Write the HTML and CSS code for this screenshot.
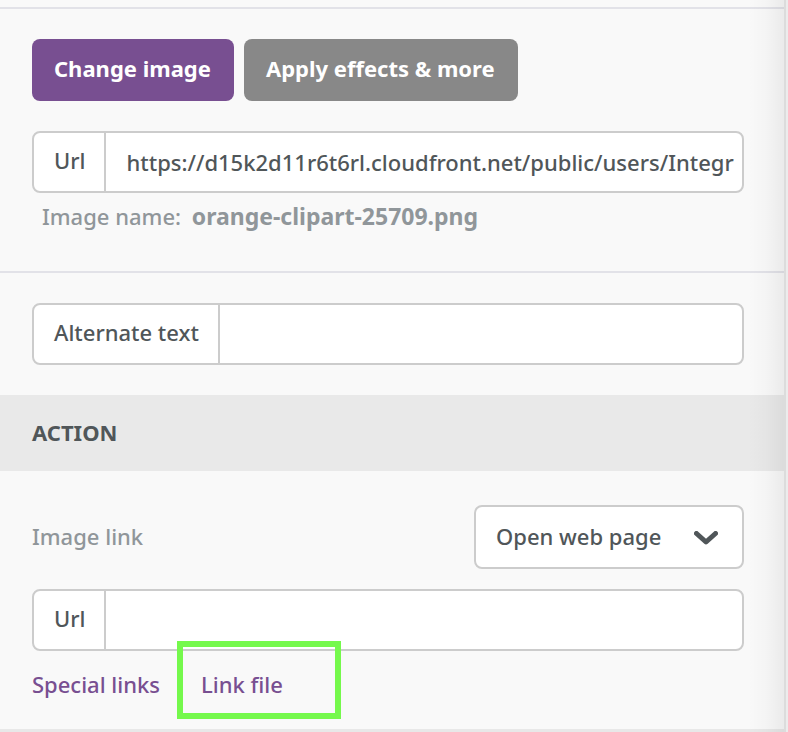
FILE: index.html
```html
<!DOCTYPE html>
<html lang="en">
<head>
<meta charset="utf-8">
<meta name="viewport" content="width=device-width, initial-scale=1">
<title>Image settings</title>
<link rel="stylesheet" href="styles.css">
</head>
<body>
<main class="panel">
  <section class="section section-image">
    <div class="buttons">
      <button type="button" class="btn btn-primary">Change image</button>
      <button type="button" class="btn btn-secondary">Apply effects &amp; more</button>
    </div>
    <div class="field">
      <label class="field-label" for="image-url">Url</label>
      <input class="field-input" id="image-url" type="text" value="https://d15k2d11r6t6rl.cloudfront.net/public/users/Integr">
    </div>
    <p class="image-name">Image name: <strong class="file-name">orange-clipart-25709.png</strong></p>
  </section>
  <section class="section section-alt">
    <div class="field">
      <label class="field-label" for="alt-text">Alternate text</label>
      <input class="field-input" id="alt-text" type="text">
    </div>
  </section>
  <h2 class="heading">ACTION</h2>
  <section class="section section-action">
    <div class="link-row">
      <label class="link-label" for="link-type">Image link</label>
      <div class="select-wrap">
        <select class="select" id="link-type">
          <option>Open web page</option>
        </select>
        <svg class="chevron" viewBox="0 0 24 14" aria-hidden="true"><path d="M2.500 2.500 12 11 21.500 2.500"/></svg>
      </div>
    </div>
    <div class="field">
      <label class="field-label" for="link-url">Url</label>
      <input class="field-input" id="link-url" type="text">
    </div>
    <nav class="links">
      <a class="link" href="#special">Special links</a>
      <a class="link link-marked" href="#file">Link file</a>
    </nav>
  </section>
</main>
</body>
</html>
```
FILE: styles.css
```css
*,
*::before,
*::after {
  box-sizing: border-box;
}

body {
  margin: 0;
  background: #ececec;
  color: #505659;
  font: 500 22px/30px "Noto Sans", "Open Sans", sans-serif;
}

.panel {
  position: relative;
  margin-right: 2px;
  padding-top: 7px;
  border-right: 2px solid #dcdcdc;
  background: #f9f9f9;
}

/* Soft shade along the right edge */
.panel::after {
  content: "";
  position: absolute;
  top: 0;
  right: 0;
  bottom: 0;
  width: 36px;
  background: linear-gradient(to right, rgba(0, 0, 0, 0), rgba(0, 0, 0, 0.02) 50%, rgba(0, 0, 0, 0.06));
  pointer-events: none;
}

.section {
  padding: 30px 40px 30px 32px;
}

.section-image {
  border-top: 2px solid #e2e2e8;
  border-bottom: 2px solid #e2e2e8;
  padding-bottom: 40px;
}

.section-action {
  padding-top: 34px;
  border-bottom: 3px solid #e8e8e8;
}

.buttons {
  display: flex;
  gap: 10px;
  margin-bottom: 30px;
}

.btn {
  height: 62px;
  padding: 0 23px 4px 22px;
  border: 0;
  border-radius: 8px;
  color: #fff;
  font: inherit;
  font-weight: 700;
}

.btn-primary {
  background: #784f91;
}

.btn-secondary {
  background: #888;
}

.field {
  display: flex;
  height: 62px;
  border: 2px solid #ccc;
  border-radius: 8px;
  background: #fff;
  overflow: hidden;
}

.field-label {
  display: flex;
  align-items: center;
  padding: 0 19px 4px 20px;
  border-right: 2px solid #ccc;
  white-space: nowrap;
}

.field-input {
  flex: 1;
  min-width: 0;
  padding: 0 6px 0 20px;
  border: 0;
  outline: 0;
  background: transparent;
  color: inherit;
  font: inherit;
}

.image-name {
  margin: 8px 0 0 10px;
  color: #90969a;
}

.file-name {
  margin-left: 5px;
  font-size: 23px;
  font-weight: 700;
}

.heading {
  margin: 0;
  padding: 22px 32px 24px;
  background: #e9e9e9;
  font-size: 22px;
  font-weight: 700;
}

.link-row {
  display: flex;
  align-items: center;
  justify-content: space-between;
  margin-bottom: 20px;
}

.link-label {
  padding-bottom: 2px;
  color: #90969a;
}

.select-wrap {
  position: relative;
  width: 270px;
}

.select {
  display: block;
  width: 100%;
  height: 64px;
  padding: 0 20px 2px;
  border: 2px solid #ccc;
  border-radius: 8px;
  appearance: none;
  background: #fff;
  color: inherit;
  font: inherit;
}

.chevron {
  position: absolute;
  top: 26px;
  right: 26px;
  width: 24px;
  height: 14px;
  fill: none;
  stroke: #505659;
  stroke-width: 5;
  stroke-linecap: round;
  stroke-linejoin: round;
  pointer-events: none;
}

.links {
  display: flex;
  gap: 41px;
  margin-top: 18px;
}

.link {
  position: relative;
  color: #784f91;
  text-decoration: none;
}

/* Highlight frame around the file link */
.link-marked::after {
  content: "";
  position: absolute;
  top: -28px;
  left: -24px;
  width: 164px;
  height: 78px;
  border: 6px solid #75f94c;
}
```
